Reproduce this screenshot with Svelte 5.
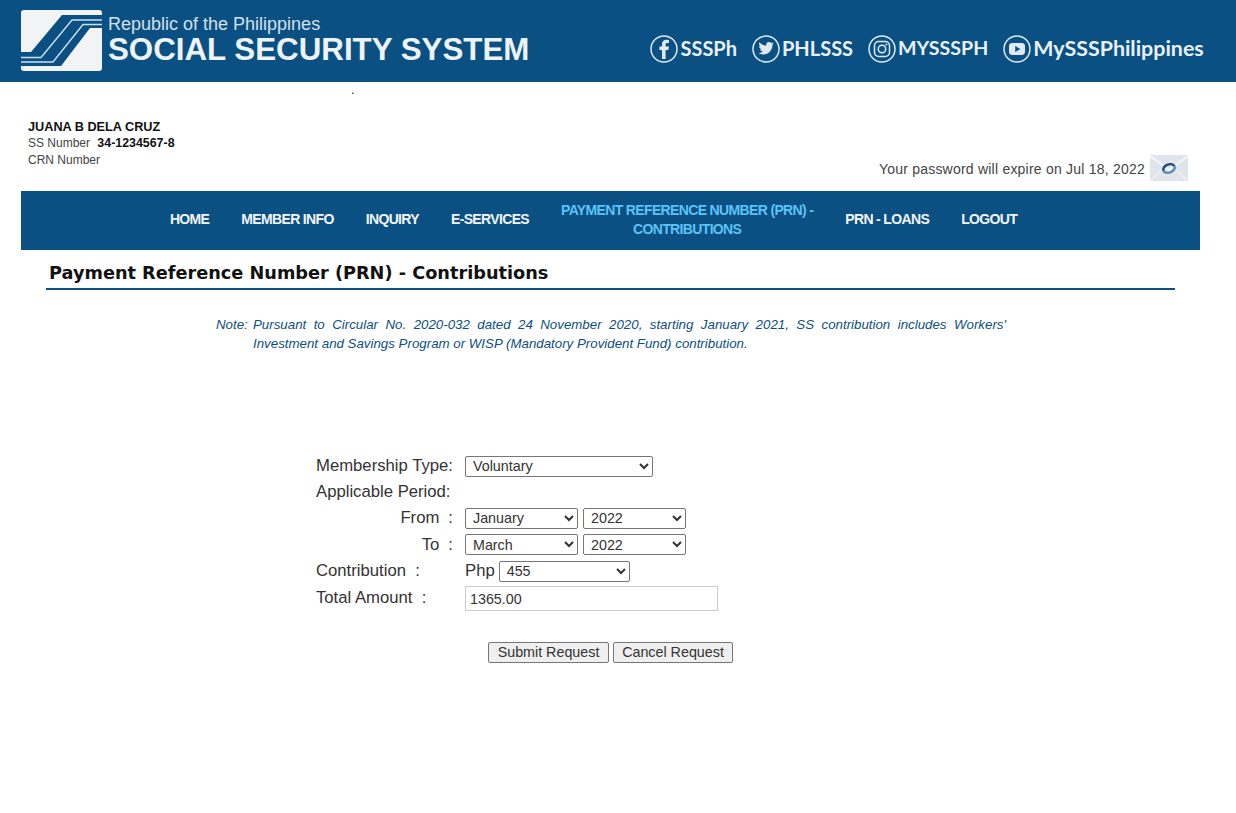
<script>
  const nav = ['HOME', 'MEMBER INFO', 'INQUIRY', 'E-SERVICES'];
</script>

<header class="banner">
  <svg class="logo" viewBox="0 0 81 61" width="81" height="61" aria-label="SSS logo">
    <rect width="81" height="61" rx="3" fill="#f2f3f5" />
    <path d="M0 42 H10 L41 5 H81 V18 H69 L40 56 H0 Z" fill="#0b5083" />
    <path d="M0 47.5 H20 L51 10 H81 M0 52 H32 L62 14.5 H81" fill="none" stroke="#cfe0ee" stroke-width="1.4" />
  </svg>
  <div class="brand">
    <div class="republic">Republic of the Philippines</div>
    <div class="sss">SOCIAL SECURITY SYSTEM</div>
  </div>
  <div class="socials">
    <div class="social">
      <svg viewBox="0 0 28 28" width="28" height="28"><circle cx="14" cy="14" r="13" class="ring" /><path d="M15.6 24 V15 H18.4 L18.9 11.6 H15.6 V9.6 C15.6 8.6 16 8 17.2 8 H19 V5 C18.2 4.9 17.3 4.8 16.4 4.8 C13.8 4.8 12 6.4 12 9.2 V11.6 H9.4 V15 H12 V24 Z" class="fill" /></svg>
      <span>SSSPh</span>
    </div>
    <div class="social">
      <svg viewBox="0 0 28 28" width="28" height="28"><circle cx="14" cy="14" r="13" class="ring" /><path d="M22 8.6 C21.4 8.9 20.8 9 20.1 9.1 C20.8 8.7 21.3 8.1 21.6 7.3 C20.9 7.7 20.2 8 19.4 8.1 C18.8 7.5 17.9 7.1 17 7.1 C15.1 7.1 13.7 8.9 14.2 10.7 C11.5 10.6 9.1 9.3 7.5 7.3 C6.7 8.7 7.1 10.6 8.5 11.5 C8 11.5 7.5 11.3 7 11.1 C7 12.6 8.1 14 9.6 14.3 C9.1 14.4 8.6 14.5 8.1 14.4 C8.5 15.7 9.7 16.6 11.1 16.6 C9.7 17.7 8 18.2 6.3 18 C7.7 18.9 9.4 19.4 11.2 19.4 C17.2 19.4 20.6 14.3 20.4 9.8 C21 9.4 21.6 9 22 8.6 Z" class="fill" /></svg>
      <span>PHLSSS</span>
    </div>
    <div class="social tight">
      <svg viewBox="0 0 28 28" width="28" height="28"><circle cx="14" cy="14" r="13" class="ring" /><rect x="6.5" y="6.5" width="15" height="15" rx="4.2" class="ring" /><circle cx="14" cy="14" r="3.7" class="ring" /><circle cx="18.4" cy="9.6" r="1" class="fill" /></svg>
      <span>MYSSSPH</span>
    </div>
    <div class="social last">
      <svg viewBox="0 0 28 28" width="28" height="28"><circle cx="14" cy="14" r="13" class="ring" /><rect x="6" y="8" width="16" height="12" rx="3.4" class="fill" /><path d="M12.2 11 L17.4 14 L12.2 17 Z" fill="#0b5083" /></svg>
      <span>MySSSPhilippines</span>
    </div>
  </div>
</header>

<div class="dot">.</div>

<section class="user">
  <div class="identity">
    <div class="name">JUANA B DELA CRUZ</div>
    <div class="line ss">SS Number <b>34-1234567-8</b></div>
    <div class="line crn">CRN Number</div>
  </div>
  <div class="expiry">
    <span>Your password will expire on Jul 18, 2022</span>
    <svg viewBox="0 0 38 26" width="38" height="26">
      <rect width="38" height="26" rx="1" fill="#dfe5ea" />
      <path d="M0 1 L19 15 L38 1" fill="none" stroke="#f4f6f8" stroke-width="2" />
      <path d="M1 25 L14 13 M37 25 L24 13" fill="none" stroke="#eef1f4" stroke-width="1.5" />
      <g transform="rotate(-18 19 13.5)" fill="none" stroke-width="2.6">
        <path d="M13.2 14 A5.8 4 0 0 1 24.8 13" stroke="#1d4f76" />
        <path d="M24.8 13 A5.8 4 0 0 1 13.2 14" stroke="#5f8fad" />
      </g>
    </svg>
  </div>
</section>

<nav class="menu">
  {#each nav as item}
    <span class="item">{item}</span>
  {/each}
  <span class="item active">PAYMENT REFERENCE NUMBER (PRN) -<br />CONTRIBUTIONS</span>
  <span class="item">PRN - LOANS</span>
  <span class="item">LOGOUT</span>
</nav>

<main class="content">
  <h1>Payment Reference Number (PRN) - Contributions</h1>
  <p class="note"><span class="tag">Note:</span>Pursuant to Circular No. 2020-032 dated 24 November 2020, starting January 2021, SS contribution includes Workers' Investment and Savings Program or WISP (Mandatory Provident Fund) contribution.</p>

  <form class="form" onsubmit={(e) => e.preventDefault()}>
    <div class="row r-type">
      <span class="label">Membership Type:</span>
      <select class="w-type"><option>Voluntary</option></select>
    </div>
    <div class="row r-period">
      <span class="label">Applicable Period:</span>
    </div>
    <div class="row r-from">
      <span class="label sub"><span>From</span><i>:</i></span>
      <select class="w-month"><option>January</option></select>
      <select class="w-year"><option>2022</option></select>
    </div>
    <div class="row r-to">
      <span class="label sub"><span>To</span><i>:</i></span>
      <select class="w-month"><option>March</option></select>
      <select class="w-year"><option>2022</option></select>
    </div>
    <div class="row r-contrib">
      <span class="label">Contribution &nbsp;:</span>
      <span class="php">Php</span>
      <select class="w-contrib"><option>455</option></select>
    </div>
    <div class="row r-total">
      <span class="label">Total Amount &nbsp;:</span>
      <input class="total" value="1365.00" readonly />
    </div>
    <div class="actions">
      <button type="button">Submit Request</button>
      <button type="button">Cancel Request</button>
    </div>
  </form>
</main>

<style>
  :global(body) {
    margin: 0;
    background: #fff;
    font-family: "Liberation Sans", Arial, sans-serif;
    color: #333;
  }

  .banner {
    height: 82px;
    background: #0b5083;
    display: flex;
    align-items: flex-start;
    padding-left: 21px;
    box-sizing: border-box;
    position: relative;
  }
  .logo { margin-top: 10px; flex: none; }
  .brand { margin-left: 6px; margin-top: 13px; color: #eef3f7; }
  .republic { font-size: 18px; line-height: 22px; color: #d3e0ea; }
  .sss { font-size: 31.3px; line-height: 33px; margin-top: -2px; font-weight: 700; color: #eef3f7; white-space: nowrap; }

  .socials {
    display: flex;
    margin-left: 121px;
    margin-top: 35px;
    gap: 15px;
    color: #eaf1f6;
  }
  .social { display: flex; align-items: center; gap: 2px; }
  .social span {
    font-family: Lato, sans-serif;
    font-weight: 700;
    font-size: 20px;
    line-height: 26px;
    padding-bottom: 2px;
    white-space: nowrap;
  }
  .social.tight span { font-size: 19.6px; }
  .social.last span { font-size: 21.4px; }
  .ring { fill: none; stroke: #dfeaf2; stroke-width: 1.5; }
  .fill { fill: #dfeaf2; }

  .dot { height: 0; margin-left: 351px; font-size: 12px; line-height: 16px; color: #000; overflow: visible; }

  .user {
    height: 109px;
    margin: 0 48px 0 28px;
    position: relative;
    display: flex;
    justify-content: space-between;
    align-items: flex-end;
    box-sizing: border-box;
    padding-bottom: 10px;
  }
  .identity { align-self: flex-start; margin-top: 37px; }
  .name { font-size: 12.7px; line-height: 16px; font-weight: 700; color: #111; }
  .line { font-size: 12px; line-height: 17px; color: #444; }
  .line b { font-size: 12.4px; color: #111; margin-left: 4px; }
  .expiry { display: flex; align-items: center; gap: 5px; font-size: 14px; color: #444; letter-spacing: 0.22px; }
  .expiry span { margin-top: 2px; }

  .menu {
    height: 59px;
    margin: 0 36px 0 21px;
    background: #0b5083;
    display: flex;
    align-items: center;
    justify-content: center;
    gap: 32px;
    padding: 0 34px 2px 0;
    box-sizing: border-box;
  }
  .item {
    color: #f2f6f9;
    font-size: 14px;
    font-weight: 700;
    letter-spacing: -0.65px;
    line-height: 19px;
    text-align: center;
    white-space: nowrap;
  }
  .active { color: #5bc3f7; }

  .content { padding: 0 61px 0 46px; }
  h1 {
    margin: 12px 0 0;
    padding: 0 0 3px 3px;
    height: 23px;
    font-family: "DejaVu Sans", Verdana, sans-serif;
    font-size: 17.72px;
    line-height: 23px;
    font-weight: 700;
    color: #111;
    border-bottom: 2px solid #0b5083;
  }
  .note {
    width: 753px;
    margin: 25px 0 0 170px;
    padding-left: 37px;
    text-indent: -37px;
    font-size: 13.3px;
    line-height: 19px;
    font-style: italic;
    color: #0b5083;
    text-align: justify;
  }
  .tag { display: inline-block; width: 37px; text-indent: 0; text-align: left; }

  .form {
    margin: 100px 0 0 270px;
    width: 460px;
    font-size: 16.7px;
  }
  .row {
    display: flex;
    align-items: center;
    gap: 5px;
    height: 26px;
  }
  .label { width: 144px; flex: none; color: #333; white-space: nowrap; }
  .sub { display: flex; justify-content: flex-end; gap: 9px; padding-right: 7px; box-sizing: border-box; }
  .sub i { font-style: normal; }
  .r-to, .r-total { height: 27px; }
  select {
    font-family: "Liberation Sans", Arial, sans-serif;
    font-size: 14.3px;
    height: 21px;
    padding: 0 0 0 3px;
    background: #fff;
    color: #333;
    border: 1px solid #767676;
    border-radius: 2px;
    box-sizing: border-box;
  }
  .w-type { width: 188px; }
  .w-month { width: 113px; }
  .w-year { width: 103px; }
  .w-contrib { width: 131px; margin-left: -1px; }
  .php { color: #333; }
  .total {
    width: 253px;
    height: 25px;
    margin-top: 2px;
    padding: 0 4px;
    box-sizing: border-box;
    border: 1px solid #ccc;
    font-family: "Liberation Sans", Arial, sans-serif;
    font-size: 14.3px;
    color: #333;
    outline: none;
  }
  .actions {
    display: flex;
    gap: 4px;
    margin: 31px 0 0 172px;
  }
  button {
    height: 21px;
    padding: 0 0 2px;
    width: 121px;
    font-family: "Liberation Sans", Arial, sans-serif;
    font-size: 14.3px;
    color: #333;
    background: #efefef;
    border: 1px solid #767676;
    border-radius: 2px;
  }
  .actions button + button { width: 120px; }
</style>
